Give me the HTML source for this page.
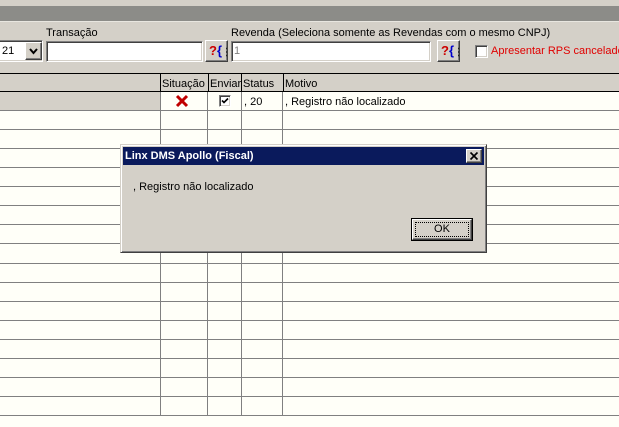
<!DOCTYPE html>
<html><head><style>
*{margin:0;padding:0;box-sizing:border-box}
body{width:619px;height:427px;overflow:hidden;background:#fffff8;font-family:"Liberation Sans",sans-serif;font-size:11px;position:relative;color:#000}
.a{position:absolute;white-space:nowrap}
.in{background:#fff;border-top:1px solid #808080;border-left:1px solid #808080;border-bottom:1px solid #fff;border-right:1px solid #fff;box-shadow:inset 1px 1px 0 #404040,inset -1px -1px 0 #d4d0c8}
.btn{background:#d4d0c8;border-top:1px solid #fff;border-left:1px solid #fff;border-right:1px solid #404040;border-bottom:1px solid #404040;box-shadow:inset -1px -1px 0 #808080}
.vl{position:absolute;top:92px;height:324px;width:1px;background:#808080}
.hl{position:absolute;left:0;width:619px;height:1px;background:#808080}
.q{font-weight:bold;font-size:13px;line-height:19px;padding-left:3px;white-space:nowrap;overflow:hidden}
</style></head><body>
<div class="a" style="left:0;top:0;width:619px;height:73px;background:#d4d0c8"></div>
<div class="a" style="left:0;top:6px;width:619px;height:15px;background:#8c8c88"></div>
<div class="a" style="left:0;top:21px;width:619px;height:1px;background:#e8e6e0"></div>
<div class="a" style="left:46px;top:27px">Transação</div>
<div class="a" style="left:231px;top:27px">Revenda (Seleciona somente as Revendas com o mesmo CNPJ)</div>
<div class="a in" style="left:-4px;top:40px;width:47px;height:22px"></div>
<div class="a" style="left:2px;top:45px">21</div>
<div class="a btn" style="left:25px;top:42px;width:17px;height:18px"><svg width="15" height="16" viewBox="0 0 15 16"><path d="M4 6l3.5 4 3.5-4" stroke="#000" stroke-width="2" fill="none"/></svg></div>
<div class="a in" style="left:46px;top:41px;width:157px;height:21px"></div>
<div class="a btn q" style="left:205px;top:40px;width:23px;height:22px"><span style="color:#c00">?</span><span style="color:#00c">{</span><span style="color:#000;font-size:10px">&#8942;</span></div>
<div class="a in" style="left:231px;top:41px;width:200px;height:21px"></div>
<div class="a" style="left:234px;top:45px;color:#808080">1</div>
<div class="a btn q" style="left:437px;top:40px;width:23px;height:22px"><span style="color:#c00">?</span><span style="color:#00c">{</span><span style="color:#000;font-size:10px">&#8942;</span></div>
<div class="a in" style="left:475px;top:45px;width:13px;height:13px"></div>
<div class="a" style="left:491px;top:45px;color:#e00000">Apresentar RPS cancelados</div>
<div class="a" style="left:0;top:73px;width:619px;height:1px;background:#000"></div>
<div class="a" style="left:0;top:74px;width:619px;height:17px;background:#d4d0c8"></div>
<div class="a" style="left:0;top:91px;width:619px;height:1px;background:#000"></div>
<div class="a" style="left:0;top:92px;width:619px;height:18px;background:#d4d0c8"></div>
<div class="a" style="left:160px;top:74px;width:1px;height:18px;background:#000"></div>
<div class="a" style="left:208px;top:74px;width:1px;height:18px;background:#000"></div>
<div class="a" style="left:241px;top:74px;width:1px;height:18px;background:#000"></div>
<div class="a" style="left:283px;top:74px;width:1px;height:18px;background:#000"></div>
<div class="a" style="left:162px;top:78px">Situação</div>
<div class="a" style="left:210px;top:78px">Enviar</div>
<div class="a" style="left:243px;top:78px">Status</div>
<div class="a" style="left:285px;top:78px">Motivo</div>
<div class="a" style="left:161px;top:92px;width:458px;height:18px;background:#fffff8"></div>
<svg class="a" style="left:175px;top:94px" width="14" height="14" viewBox="0 0 14 14"><path d="M2 2L12 12M12 2L2 12" stroke="#c00000" stroke-width="3"/></svg>
<div class="a in" style="left:219px;top:95px;width:12px;height:12px"><svg width="10" height="10" viewBox="0 0 10 10" style="position:absolute;left:0;top:0"><path d="M2 4.5l2 2 4-4" stroke="#000" stroke-width="1.6" fill="none"/></svg></div>
<div class="a" style="left:244px;top:96px">, 20</div>
<div class="a" style="left:285px;top:96px">, Registro não localizado</div>
<div class="vl" style="left:160px"></div><div class="vl" style="left:207px"></div><div class="vl" style="left:241px"></div><div class="vl" style="left:282px"></div>
<div class="hl" style="top:110px"></div><div class="hl" style="top:129px"></div><div class="hl" style="top:148px"></div><div class="hl" style="top:167px"></div><div class="hl" style="top:186px"></div><div class="hl" style="top:205px"></div><div class="hl" style="top:224px"></div><div class="hl" style="top:243px"></div><div class="hl" style="top:263px"></div><div class="hl" style="top:282px"></div><div class="hl" style="top:301px"></div><div class="hl" style="top:320px"></div><div class="hl" style="top:339px"></div><div class="hl" style="top:358px"></div><div class="hl" style="top:377px"></div><div class="hl" style="top:396px"></div><div class="hl" style="top:415px"></div>
<div class="a" style="left:120px;top:144px;width:367px;height:109px;background:#d4d0c8;border-top:1px solid #d4d0c8;border-left:1px solid #d4d0c8;border-right:1px solid #404040;border-bottom:1px solid #404040;box-shadow:inset 1px 1px 0 #fff,inset -1px -1px 0 #808080">
<div class="a" style="left:2px;top:2px;width:361px;height:18px;background:#0a1a5c;color:#fff;font-weight:bold;line-height:18px;padding-left:2px">Linx DMS Apollo (Fiscal)</div>
<div class="a btn" style="left:345px;top:4px;width:16px;height:14px"><svg width="14" height="12" viewBox="0 0 14 12" style="position:absolute;left:0;top:0"><path d="M3.5 2.5l7 7M10.5 2.5l-7 7" stroke="#000" stroke-width="1.6"/></svg></div>
<div class="a" style="left:12px;top:36px">, Registro não localizado</div>
<div class="a" style="left:290px;top:73px;width:62px;height:23px;border:1px solid #000"><div class="btn" style="width:60px;height:21px;position:relative"><div style="position:absolute;left:3px;top:3px;width:52px;height:13px;outline:1px dotted #000;text-align:center;line-height:13px">OK</div></div></div>
</div>
</body></html>
